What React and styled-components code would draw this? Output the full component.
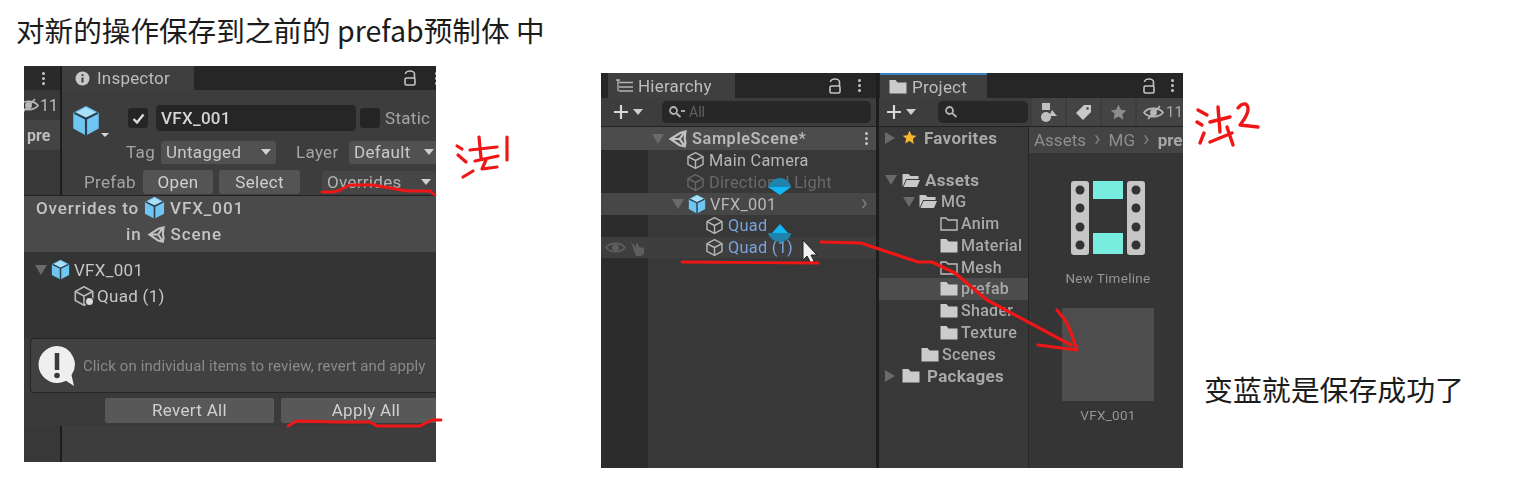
import React from 'react';
import styled, { createGlobalStyle } from 'styled-components';

const Global = createGlobalStyle`
  html, body { margin: 0; padding: 0; background: #fff; }
  body { font-family: "Roboto", "Liberation Sans", sans-serif; overflow: hidden; }
`;

const Page = styled.div`
  position: relative;
  width: 1513px;
  height: 492px;
  overflow: hidden;
  background: #fff;
`;
const Title = styled.h1`
  margin: 0;
  padding: 12px 0 0 16px;
  height: 66px;
  box-sizing: border-box;
  font: 400 28.6px/36px "Noto Sans CJK SC", "Noto Sans", sans-serif;
  color: #1c1c1c;
  white-space: pre;
`;
const Figures = styled.div`
  display: flex;
  align-items: flex-start;
  padding-left: 24px;
`;
const Caption = styled.p`
  margin: 304px 0 0 21px;
  font: 400 28.9px/36px "Noto Sans CJK SC", sans-serif;
  color: #1c1c1c;
  white-space: nowrap;
`;

/* ---------- Unity shots ---------- */
const Shot = styled.div`
  position: relative;
  flex: none;
  width: ${p => p.$w}px;
  height: ${p => p.$h}px;
  margin: ${p => p.$m || 0};
  display: flex;
  overflow: hidden;
  background: #383838;
  filter: blur(0.65px);
  color: #c6c6c6;
  font-size: 17px;
  box-shadow: ${p => p.$edge ? `inset 2px 0 0 ${p.$edge}` : 'none'};
`;
const Column = styled.div`
  flex: ${p => p.$w ? 'none' : 1};
  width: ${p => p.$w ? p.$w + 'px' : 'auto'};
  min-width: 0;
  display: flex;
  flex-direction: column;
  background: ${p => p.$bg || '#383838'};
  border-right: ${p => p.$line ? `${p.$line}px solid #1d1d1d` : 'none'};
`;
const TabBar = styled.div`
  flex: none;
  height: ${p => p.$h || 25}px;
  display: flex;
  align-items: stretch;
  background: #262626;
  padding-left: ${p => p.$pl || 0}px;
  color: #bdbdbd;
`;
const Tab = styled.div`
  width: ${p => p.$w}px;
  display: flex;
  align-items: center;
  gap: ${p => p.$gap || 5}px;
  padding-left: ${p => p.$pl || 8}px;
  box-sizing: border-box;
  background: #3f3f3f;
  letter-spacing: 0.2px;
  border-top: ${p => p.$accent ? '2px solid #3a7fc0' : 'none'};
`;
const TabTools = styled.div`
  margin-left: auto;
  display: flex;
  align-items: center;
  gap: 13px;
  padding-right: ${p => p.$pr || 0}px;
`;
const Dots = styled.span`
  display: inline-flex;
  flex-direction: column;
  gap: 2px;
  margin: ${p => p.$m || 0};
  & > i { width: 3px; height: 3px; background: #c4c4c4; border-radius: 50%; display: block; }
`;
const ThreeDots = ({ m }) => <Dots $m={m}><i /><i /><i /></Dots>;

/* Inspector */
const Stub = styled.div`
  display: flex;
  flex-direction: column;
  height: 100%;
  font-size: 16px;
  overflow: hidden;
  background: #383838;
`;
const StubTop = styled.div`
  height: 24px;
  background: #2a2a2a;
  display: flex;
  align-items: center;
  justify-content: center;
  padding-left: 3px;
`;
const StubRow = styled.div`
  height: 30px;
  display: flex;
  align-items: center;
  gap: 1px;
  white-space: nowrap;
  background: ${p => p.$bg || '#383838'};
  font-weight: ${p => p.$bold ? 700 : 400};
  color: #bdbdbd;
  justify-content: ${p => p.$start ? 'flex-start' : 'flex-end'};
  padding: 0 ${p => p.$pr || 0}px 0 ${p => p.$pl || 0}px;
`;
const InspectorBody = styled.div`
  flex: 1;
  display: flex;
  flex-direction: column;
  background: #3d3d3d;
  padding-top: 15px;
  gap: 9px;
`;
const FieldRow = styled.div`
  display: flex;
  align-items: center;
  height: ${p => p.$h || 24}px;
  margin-top: ${p => p.$mt || 0}px;
  padding-left: ${p => p.$pl || 0}px;
  white-space: nowrap;
`;
const ObjectIcon = styled.span`
  position: relative;
  flex: none;
  width: 28px;
  height: 32px;
  margin: 6px 28px 0 0;
`;
const IconCaret = styled.span`
  position: absolute;
  right: -9px;
  bottom: 0;
  width: 0;
  height: 0;
  border-left: 4px solid transparent;
  border-right: 4px solid transparent;
  border-top: 4px solid #d8d8d8;
`;
const Check = styled.span`
  flex: none;
  width: 20px;
  height: 20px;
  border-radius: 3px;
  background: #252525;
  display: flex;
  align-items: center;
  justify-content: center;
  margin: ${p => p.$m || 0};
`;
const NameField = styled.div`
  flex: none;
  width: 200px;
  height: 26px;
  background: #262626;
  border-radius: 4px;
  font-weight: 500;
  line-height: 26px;
  padding-left: 5px;
  box-sizing: border-box;
  letter-spacing: 0.3px;
  color: #d4d4d4;
`;
const Label = styled.span`
  flex: none;
  width: ${p => p.$w ? p.$w + 'px' : 'auto'};
  text-align: ${p => p.$align || 'left'};
  margin: ${p => p.$m || 0};
  color: #a4a4a4;
  letter-spacing: 0.3px;
`;
const Drop = styled.div`
  flex: none;
  width: ${p => p.$w}px;
  height: 23px;
  margin: ${p => p.$m || 0};
  background: ${p => p.$dim ? '#464646' : '#515151'};
  border-radius: 3px;
  padding-left: 5px;
  box-sizing: border-box;
  display: flex;
  align-items: center;
  justify-content: space-between;
  color: ${p => p.$dim ? '#b4b4b4' : '#c8c8c8'};
  letter-spacing: 0.3px;
`;
const Caret = styled.span`
  flex: none;
  width: 0;
  height: 0;
  margin: ${p => p.$m || '0 5px 0 0'};
  border-left: 5px solid transparent;
  border-right: 5px solid transparent;
  border-top: 6px solid #cfcfcf;
`;
const Arrow = styled.span`
  flex: none;
  display: block;
  width: 0;
  height: 0;
  ${p => p.$open
    ? `border-left:6px solid transparent;border-right:6px solid transparent;border-top:10px solid #6a6a6a;`
    : `border-top:6px solid transparent;border-bottom:6px solid transparent;border-left:10px solid #6a6a6a;`}
`;
const SmallBtn = styled.div`
  flex: none;
  width: ${p => p.$w}px;
  height: 24px;
  margin: ${p => p.$m || 0};
  background: #545454;
  border-radius: 3px;
  text-align: center;
  line-height: 24px;
  letter-spacing: 0.3px;
  color: #d0d0d0;
`;
const Popup = styled.div`
  position: absolute;
  left: 0;
  right: 0;
  top: 129px;
  height: 231px;
  display: flex;
  flex-direction: column;
  background: #3a3a3a;
  border-top: 1px solid #222;
  box-sizing: border-box;
`;
const PopupHead = styled.div`
  height: 56px;
  flex: none;
  background: #4a4a4a;
  color: #c4c4c4;
  font-weight: 500;
  letter-spacing: 0.9px;
  display: flex;
  flex-direction: column;
`;
const HeadLine = styled.div`
  height: 26px;
  margin-top: ${p => p.$mt || 0}px;
  display: flex;
  align-items: center;
  gap: 5px;
  padding-left: ${p => p.$pl}px;
`;
const PopupTree = styled.div`
  height: 86px;
  flex: none;
  background: #343434;
  padding-top: 5px;
  box-sizing: border-box;
`;
const TreeLine = styled.div`
  height: 26px;
  display: flex;
  align-items: center;
  gap: ${p => p.$gap || 3}px;
  padding-left: ${p => p.$pl}px;
  letter-spacing: 0.3px;
`;
const InfoBox = styled.div`
  margin-left: 6px;
  height: 53px;
  flex: none;
  background: #414141;
  border: 1px solid #252525;
  border-right: none;
  border-radius: 4px 0 0 4px;
  display: flex;
  align-items: center;
  gap: 7px;
  padding-left: 7px;
  font-size: 15px;
  letter-spacing: 0.1px;
  color: #8a8a8a;
  white-space: nowrap;
  overflow: hidden;
`;
const PopupFoot = styled.div`
  display: flex;
  gap: 7px;
  padding: 5px 0 0 81px;
`;
const FootBtn = styled(SmallBtn)`
  height: 25px;
  line-height: 25px;
  background: #585858;
  border-radius: 2px;
`;

/* Hierarchy */
const Toolbar = styled.div`
  flex: none;
  height: 29px;
  display: flex;
  align-items: center;
  background: #3d3d3d;
  border-bottom: 1px solid #222;
  box-sizing: border-box;
`;
const AddBtn = styled.span`
  flex: none;
  display: flex;
  align-items: center;
  gap: 4px;
  margin-left: ${p => p.$ml || 12}px;
  width: ${p => p.$w || 36}px;
`;
const Search = styled.div`
  flex: none;
  width: ${p => p.$w}px;
  height: 22px;
  margin-left: ${p => p.$ml || 0}px;
  background: #272727;
  border-radius: 5px;
  display: flex;
  align-items: center;
  gap: 3px;
  padding-left: 6px;
  box-sizing: border-box;
  color: #606060;
  font-size: 14px;
`;
const HierBody = styled.div`
  flex: 1;
  display: flex;
  flex-direction: column;
  background: linear-gradient(90deg, #2c2c2c 0, #2c2c2c 47px, #383838 47px);
`;
const HierRow = styled.div`
  position: relative;
  height: ${p => p.$h || 21.7}px;
  flex: none;
  display: flex;
  align-items: center;
  gap: 4px;
  padding-left: ${p => p.$pl}px;
  padding-right: 8px;
  background: ${p => p.$bg || 'transparent'};
  font-weight: ${p => p.$bold ? 600 : 400};
  color: ${p => p.$blue ? '#7aa3dc' : p.$dim ? '#6a6a6a' : '#b8b8b8'};
  letter-spacing: ${p => p.$bold ? 0.6 : 0.3}px;
  white-space: nowrap;
  font-size: 16.3px;
`;
const RowGutter = styled.div`
  position: absolute;
  left: 4px;
  top: 3px;
  display: flex;
  gap: 4px;
  align-items: center;
`;
const PushEnd = styled.span`
  margin-left: auto;
  display: flex;
  align-items: center;
`;
const Chevron = styled.span`
  font-size: 22px;
  line-height: 1;
  color: #808080;
  margin-top: -3px;
`;

/* Project */
const ProjTree = styled.div`
  flex: 1;
  display: flex;
  flex-direction: column;
`;
const ProjRow = styled.div`
  height: 21.75px;
  flex: none;
  display: flex;
  align-items: center;
  gap: ${p => p.$gap || 3}px;
  padding-left: ${p => p.$pl}px;
  margin-top: ${p => p.$mt || 0}px;
  background: ${p => p.$sel ? '#4c4c4c' : 'transparent'};
  font-weight: ${p => p.$bold ? 700 : 500};
  color: #a9a9a9;
  font-size: ${p => p.$bold ? 17 : 16}px;
  letter-spacing: 0.3px;
  white-space: nowrap;
  overflow: hidden;
`;
const IconBtn = styled.span`
  flex: none;
  width: ${p => p.$w || 33}px;
  height: 28px;
  display: flex;
  align-items: center;
  justify-content: ${p => p.$start ? 'flex-start' : 'center'};
  gap: 2px;
  background: #444;
  margin-right: 2px;
  padding-left: ${p => p.$start ? 6 : 0}px;
  box-sizing: border-box;
  font-size: 15px;
  color: #aaa;
`;
const ToolCut = styled.div`
  flex: 1;
  display: flex;
  overflow: hidden;
  padding-left: 4px;
`;
const Crumbs = styled.div`
  flex: none;
  height: 26px;
  background: #444;
  display: flex;
  align-items: center;
  gap: 8px;
  padding-left: 5px;
  white-space: nowrap;
  overflow: hidden;
  color: #8e8e8e;
  font-size: 17px;
`;
const CrumbNow = styled.b`
  font-weight: 700;
  color: #a8a8a8;
`;
const Assets = styled.div`
  flex: 1;
  display: flex;
  flex-direction: column;
  align-items: center;
  padding: 28px 0 0 4px;
  background: #353535;
`;
const AssetName = styled.div`
  margin-top: ${p => p.$mt}px;
  font-size: 13.5px;
  letter-spacing: 0.3px;
  color: #969696;
  line-height: 16px;
`;
const PrefabThumb = styled.div`
  margin-top: 22px;
  width: 92px;
  height: 93px;
  background: #4d4d4d;
`;
const Ink = styled.svg`
  position: absolute;
  left: 0;
  top: 0;
  pointer-events: none;
  fill: none;
  stroke: #f01616;
  stroke-linecap: round;
  stroke-linejoin: round;
`;
const Markers = styled.svg`
  position: absolute;
  left: 0;
  top: 0;
  pointer-events: none;
`;
const ColumnsWrap = styled.div`
  flex: 1;
  display: flex;
  min-height: 0;
`;
const ProjectLeft = styled.div`
  flex: none;
  width: 149px;
  border-right: 1px solid #262626;
  display: flex;
  flex-direction: column;
`;
const ProjectRight = styled.div`
  flex: 1;
  min-width: 0;
  display: flex;
  flex-direction: column;
`;

/* ---------- Icons ---------- */
const PrefabCube = ({ s = 18 }) => (
  <svg width={s} height={s * 1.12} viewBox="0 0 28 32" style={{ flex: 'none', display: 'block' }}>
    <path d="M14 1 27 8v16L14 31 1 24V8z" fill="#6fc6f2" />
    <path d="M14 2.500 25 8.500 14 14 3 8.500z" fill="#a9e1fb" />
    <path d="M14 14v17M2 8l12 6 12-6" stroke="#2c3e4c" strokeWidth="2.200" fill="none" />
  </svg>
);
const GoCube = ({ s = 19, c = '#b6b6b6', badge }) => (
  <svg width={s} height={s} viewBox="0 0 24 24" fill="none" stroke={c} strokeWidth="1.800" strokeLinejoin="round" style={{ flex: 'none' }}>
    <path d="M12 2 21.500 7v10L12 22 2.500 17V7z" />
    <path d="M2.500 7 12 12l9.500-5M12 12v10" />
    {badge && <circle cx="18" cy="18" r="4.500" fill="#ddd" stroke="#333" strokeWidth="1.400" />}
  </svg>
);
const UnityMark = ({ s = 20, c = '#c2c2c2' }) => (
  <svg width={s} height={s} viewBox="0 0 24 24" fill="none" stroke={c} strokeWidth="2.600" style={{ flex: 'none' }}>
    <path d="M3 12 15 4.500 21 3l-1 8 1 5.500-1 4.500-6-1.500zM3 12h11l5-7M14 12l5 7" />
  </svg>
);
const Folder = ({ open, outline }) => (
  <svg width="18" height="15" viewBox="0 0 18 15" style={{ flex: 'none' }}>
    {outline ? (
      <path d="M1 2h5l2 2h9v10H1z" fill="none" stroke="#bdbdbd" strokeWidth="1.400" />
    ) : open ? (
      <>
        <path d="M0.500 1h6l2 2h8v3H4L1 13H0.500z" fill="#c9c9c9" />
        <path d="M4.500 7H18l-3 7H1.500z" fill="#c9c9c9" />
      </>
    ) : (
      <path d="M0.500 1h6l2 2.500h9v11h-17z" fill="#cbcbcb" />
    )}
  </svg>
);
const Plus = () => (
  <svg width="16" height="16" viewBox="0 0 16 16" style={{ flex: 'none' }}>
    <path d="M8 1v14M1 8h14" stroke="#d8d8d8" strokeWidth="2.200" />
  </svg>
);
const Lock = () => (
  <svg width="12" height="16" viewBox="0 0 12 16" fill="none" stroke="#c4c4c4" strokeWidth="1.600" style={{ flex: 'none' }}>
    <path d="M1.500 4a4.500 3 0 0 1 9 0v4" />
    <rect x="1" y="8" width="10" height="7" rx="1.500" />
  </svg>
);
const Glass = ({ tail }) => (
  <svg width={tail ? 18 : 14} height="14" viewBox={tail ? '0 0 18 14' : '0 0 14 14'} fill="none" stroke="#b4b4b4" strokeWidth="1.800" style={{ flex: 'none' }}>
    <circle cx="5.500" cy="5.500" r="3.500" />
    <path d="M8 8l4.500 4" />
    {tail && <path d="M13 6h4" />}
  </svg>
);
const InfoDot = () => (
  <svg width="15" height="15" viewBox="0 0 15 15" style={{ flex: 'none' }}>
    <circle cx="7.500" cy="7.500" r="7" fill="#c8c8c8" />
    <path d="M7.500 6.500v5M7.500 3.200v1.800" stroke="#3a3a3a" strokeWidth="2" />
  </svg>
);
const HierIcon = () => (
  <svg width="17" height="13" viewBox="0 0 17 13" fill="none" stroke="#b4b4b4" strokeWidth="1.300" style={{ flex: 'none' }}>
    <path d="M0 1h4M3 3.500h14M3 8h14M3 12h14M2 1v11" />
  </svg>
);
const Alert = () => (
  <svg width="38" height="42" viewBox="0 0 38 42" style={{ flex: 'none' }}>
    <path d="M19 1a18.500 18.500 0 1 0 9 34.700L36 41l-2.500-11A18.500 18.500 0 0 0 19 1z" fill="#efefef" />
    <path d="M19 8v17" stroke="#3a3a3a" strokeWidth="4.500" />
    <circle cx="19" cy="30.500" r="2.800" fill="#3a3a3a" />
  </svg>
);
const CheckMark = () => (
  <svg width="13" height="11" viewBox="0 0 13 11" fill="none" stroke="#dcdcdc" strokeWidth="2.400" style={{ flex: 'none' }}>
    <path d="M1.500 6 5 9.500l6.500-8" />
  </svg>
);
const Eye = ({ slash }) => (
  <svg width="21" height="15" viewBox="0 0 21 15" fill="none" stroke={slash ? '#b8b8b8' : '#5e5e5e'} strokeWidth="1.600" style={{ flex: 'none' }}>
    <path d="M1 7.500C5 2 16 2 20 7.500 16 13 5 13 1 7.500z" />
    <circle cx="10.500" cy="7.500" r="2.600" fill={slash ? '#b8b8b8' : '#5e5e5e'} />
    {slash && <path d="M5 14 17 1" />}
  </svg>
);
const Hand = () => (
  <svg width="15" height="16" viewBox="0 0 15 16" style={{ flex: 'none' }}>
    <path d="M1 2l5 5V3l2 1 1 3 5 1v6l-3 2H6z" fill="#5e5e5e" />
  </svg>
);
const Star = ({ c, s = 16 }) => (
  <svg width={s} height={s} viewBox="0 0 24 24" style={{ flex: 'none' }}>
    <path d="M12 1l3.400 7.200 7.600 1-5.600 5.300 1.500 7.900L12 17.600l-6.900 3.800 1.500-7.900L1 9.200l7.600-1z" fill={c} />
  </svg>
);
const Shapes = () => (
  <svg width="18" height="20" viewBox="0 0 18 20" style={{ flex: 'none' }}>
    <rect x="2" y="1" width="8" height="7" fill="#c0c0c0" />
    <circle cx="6" cy="15" r="5" fill="#c0c0c0" />
    <path d="M12 8l5 6h-8z" fill="#c0c0c0" />
  </svg>
);
const TagIcon = () => (
  <svg width="17" height="17" viewBox="0 0 17 17" style={{ flex: 'none' }}>
    <path d="M16 1v7l-8 8-7-7 8-8z" fill="#c8c8c8" />
    <circle cx="12.500" cy="4.500" r="1.300" fill="#444" />
  </svg>
);
const Timeline = () => (
  <svg width="74" height="76" viewBox="0 0 74 76" style={{ flex: 'none', display: 'block' }}>
    <rect x="0" y="0" width="18" height="74" rx="3" fill="#c6c6c6" />
    <rect x="56" y="0" width="18" height="74" rx="3" fill="#c6c6c6" />
    {[9, 27, 46, 64].map(y => (
      <g key={y} fill="#333">
        <circle cx="9" cy={y} r="4.500" />
        <circle cx="65" cy={y} r="4.500" />
      </g>
    ))}
    <rect x="22" y="0" width="30" height="18" fill="#79ece0" />
    <rect x="22" y="52" width="30" height="21" fill="#79ece0" />
  </svg>
);

const InspectorShot = () => (
  <Shot $w={412} $h={396}>
    <Column $w={36} $line={2}>
      <Stub>
        <StubTop><ThreeDots /></StubTop>
        <StubRow $pr={2}><Eye slash /><span>11</span></StubRow>
        <StubRow $bg="#444" $bold $start $pl={3}><span>pre</span></StubRow>
      </Stub>
    </Column>
    <Column>
      <TabBar $h={24}>
        <Tab $w={132} $pl={13} $gap={7}><InfoDot /><span>Inspector</span></Tab>
        <TabTools><Lock /><ThreeDots m="0 -2px 0 6px" /></TabTools>
      </TabBar>
      <InspectorBody>
        <FieldRow $h={26} $pl={10}>
          <ObjectIcon><PrefabCube s={28} /><IconCaret /></ObjectIcon>
          <Check $m="0 8px 0 0"><CheckMark /></Check>
          <NameField>VFX_001</NameField>
          <Check $m="0 5px 0 4px" />
          <Label>Static</Label>
        </FieldRow>
        <FieldRow $h={24}>
          <Label $w={93} $align="right" $m="0 6px 0 0">Tag</Label>
          <Drop $w={115}>Untagged<Caret /></Drop>
          <Label $w={46} $m="0 7px 0 20px">Layer</Label>
          <Drop $w={90}>Default<Caret /></Drop>
        </FieldRow>
        <FieldRow $h={24} $pl={22} $mt={-3}>
          <Label $w={59}>Prefab</Label>
          <SmallBtn $w={70} $m="0 6px 0 0">Open</SmallBtn>
          <SmallBtn $w={81} $m="0 22px 0 0">Select</SmallBtn>
          <Drop $w={114} $dim>Overrides<Caret /></Drop>
        </FieldRow>
      </InspectorBody>
    </Column>
    <Popup>
      <PopupHead>
        <HeadLine $pl={12} $mt={-1}>Overrides to <PrefabCube s={21} /> VFX_001</HeadLine>
        <HeadLine $pl={102}>in <UnityMark s={19} /> Scene</HeadLine>
      </PopupHead>
      <PopupTree>
        <TreeLine $pl={11} $gap={4}><Arrow $open /><PrefabCube s={19} /><span>VFX_001</span></TreeLine>
        <TreeLine $pl={49} $gap={2}><GoCube s={22} badge /><span>Quad (1)</span></TreeLine>
      </PopupTree>
      <InfoBox><Alert /><span>Click on individual items to review, revert and apply</span></InfoBox>
      <PopupFoot>
        <FootBtn $w={169}>Revert All</FootBtn>
        <FootBtn $w={170}>Apply All</FootBtn>
      </PopupFoot>
    </Popup>
  </Shot>
);

const HierarchyColumn = () => (
  <Column $w={275} $line={3} $bg="#383838">
    <TabBar $pl={7}>
      <Tab $w={127}><HierIcon /><span>Hierarchy</span></Tab>
      <TabTools $pr={15}><Lock /><ThreeDots m="0 0 0 4px" /></TabTools>
    </TabBar>
    <Toolbar>
      <AddBtn $w={49}><Plus /><Caret $m="0" /></AddBtn>
      <Search $w={209}><Glass tail /><span>All</span></Search>
    </Toolbar>
    <HierBody>
      <HierRow $h={23} $pl={51} $bg="#4c4c4c" $bold>
        <Arrow $open /><UnityMark /><span>SampleScene*</span>
        <PushEnd><ThreeDots /></PushEnd>
      </HierRow>
      <HierRow $pl={85}><GoCube /><span>Main Camera</span></HierRow>
      <HierRow $pl={85} $dim><GoCube c="#666" /><span>Directional Light</span></HierRow>
      <HierRow $pl={71} $bg="#474747">
        <Arrow $open /><PrefabCube s={18} /><span>VFX_001</span>
        <PushEnd><Chevron>›</Chevron></PushEnd>
      </HierRow>
      <HierRow $pl={104} $blue><GoCube /><span>Quad</span></HierRow>
      <HierRow $pl={104} $blue $bg="#3e3e3e">
        <RowGutter><Eye /><Hand /></RowGutter>
        <GoCube /><span>Quad (1)</span>
      </HierRow>
    </HierBody>
  </Column>
);

const ProjectColumn = () => (
  <Column>
    <TabBar $pl={1}>
      <Tab $w={107} $accent $pl={9}><Folder /><span>Project</span></Tab>
      <TabTools $pr={9}><Lock /><ThreeDots m="0 0 0 3px" /></TabTools>
    </TabBar>
    <Toolbar>
      <AddBtn $w={52} $ml={7}><Plus /><Caret $m="0" /></AddBtn>
      <Search $w={90}><Glass /></Search>
      <ToolCut>
        <IconBtn><Shapes /></IconBtn>
        <IconBtn><TagIcon /></IconBtn>
        <IconBtn><Star c="#8c8c8c" s={17} /></IconBtn>
        <IconBtn $w={46} $start><Eye slash /><span>11</span></IconBtn>
      </ToolCut>
    </Toolbar>
    <ColumnsWrap>
      <ProjectLeft>
        <ProjTree>
          <ProjRow $pl={6} $bold $gap={7}><Arrow /><Star c="#f1b62f" s={15} /><span>Favorites</span></ProjRow>
          <ProjRow $pl={6} $bold $mt={20.5} $gap={5}><Arrow $open /><Folder open /><span>Assets</span></ProjRow>
          <ProjRow $pl={24} $gap={4}><Arrow $open /><Folder open /><span>MG</span></ProjRow>
          <ProjRow $pl={61}><Folder outline /><span>Anim</span></ProjRow>
          <ProjRow $pl={61}><Folder /><span>Material</span></ProjRow>
          <ProjRow $pl={61}><Folder outline /><span>Mesh</span></ProjRow>
          <ProjRow $pl={61} $sel><Folder /><span>prefab</span></ProjRow>
          <ProjRow $pl={61}><Folder /><span>Shader</span></ProjRow>
          <ProjRow $pl={61}><Folder /><span>Texture</span></ProjRow>
          <ProjRow $pl={42}><Folder /><span>Scenes</span></ProjRow>
          <ProjRow $pl={6} $bold $gap={7}><Arrow /><Folder /><span>Packages</span></ProjRow>
        </ProjTree>
      </ProjectLeft>
      <ProjectRight>
        <Crumbs>Assets <Chevron>›</Chevron> MG <Chevron>›</Chevron> <CrumbNow>pre</CrumbNow></Crumbs>
        <Assets>
          <Timeline />
          <AssetName $mt={13}>New Timeline</AssetName>
          <PrefabThumb />
          <AssetName $mt={6}>VFX_001</AssetName>
        </Assets>
      </ProjectRight>
    </ColumnsWrap>
  </Column>
);

export default function App() {
  return (
    <Page>
      <Global />
      <Title>对新的操作保存到之前的 prefab预制体 中</Title>
      <Figures>
        <InspectorShot />
        <Shot $w={582} $h={395} $m="7px 0 0 165px" $edge="#2d5f8e">
          <HierarchyColumn />
          <ProjectColumn />
        </Shot>
        <Caption>变蓝就是保存成功了</Caption>
      </Figures>

      <Markers width="1513" height="492" viewBox="0 0 1513 492">
        <path d="M768 187c2-7 8-9 12-9s10 3 11 9z" fill="#1f83ad" />
        <path d="M768 187h23l-11 8z" fill="#12b7f5" />
        <path d="M772 233l8-9 8 9z" fill="#12b7f5" />
        <path d="M768 233h23c0 5-6 9-11 9s-11-4-12-9z" fill="#1f83ad" />
        <path d="M803 240v20l4-4 4 7 3-2-3-6h6z" fill="#f2f2f2" stroke="#222" strokeWidth="1" />
      </Markers>

      <Ink width="1513" height="492" viewBox="0 0 1513 492">
        <g strokeWidth="2.800">
          <path d="M322 192l10 0 6-1 12-6 23 0 34 6 23 0 5 4" />
          <path d="M288 426l9-5 40 1 33 0 7 4 43 0 12-6 9 0" />
          <path d="M682 262l136 1" />
          <path d="M821 242l40 1 27 9 30 10 14 0 23 11 32 27 84 45" strokeWidth="3.200" />
          <path d="M1057 310l8 10 5 10 7 20-39-5" strokeWidth="3.200" />
        </g>
        <g strokeWidth="3.200">
          <path d="M457 146l5 3M458 155l8 7M463 177l10-6" />
          <path d="M470 150l27-3M479 137l2 21M475 161l23-5M486 160l-4 9 15-2" />
          <path d="M507 137l0 23" />
        </g>
        <g strokeWidth="3.400">
          <path d="M1198 110l9 5M1197 122l5 3M1200 143l4-10" />
          <path d="M1210 122l20-5M1218 107l2 25M1210 142l22-9M1227 127l6 18" />
          <path d="M1238 108c4-5 9-6 10 0 1 6-5 13-8 17l18 2" />
        </g>
      </Ink>
    </Page>
  );
}
